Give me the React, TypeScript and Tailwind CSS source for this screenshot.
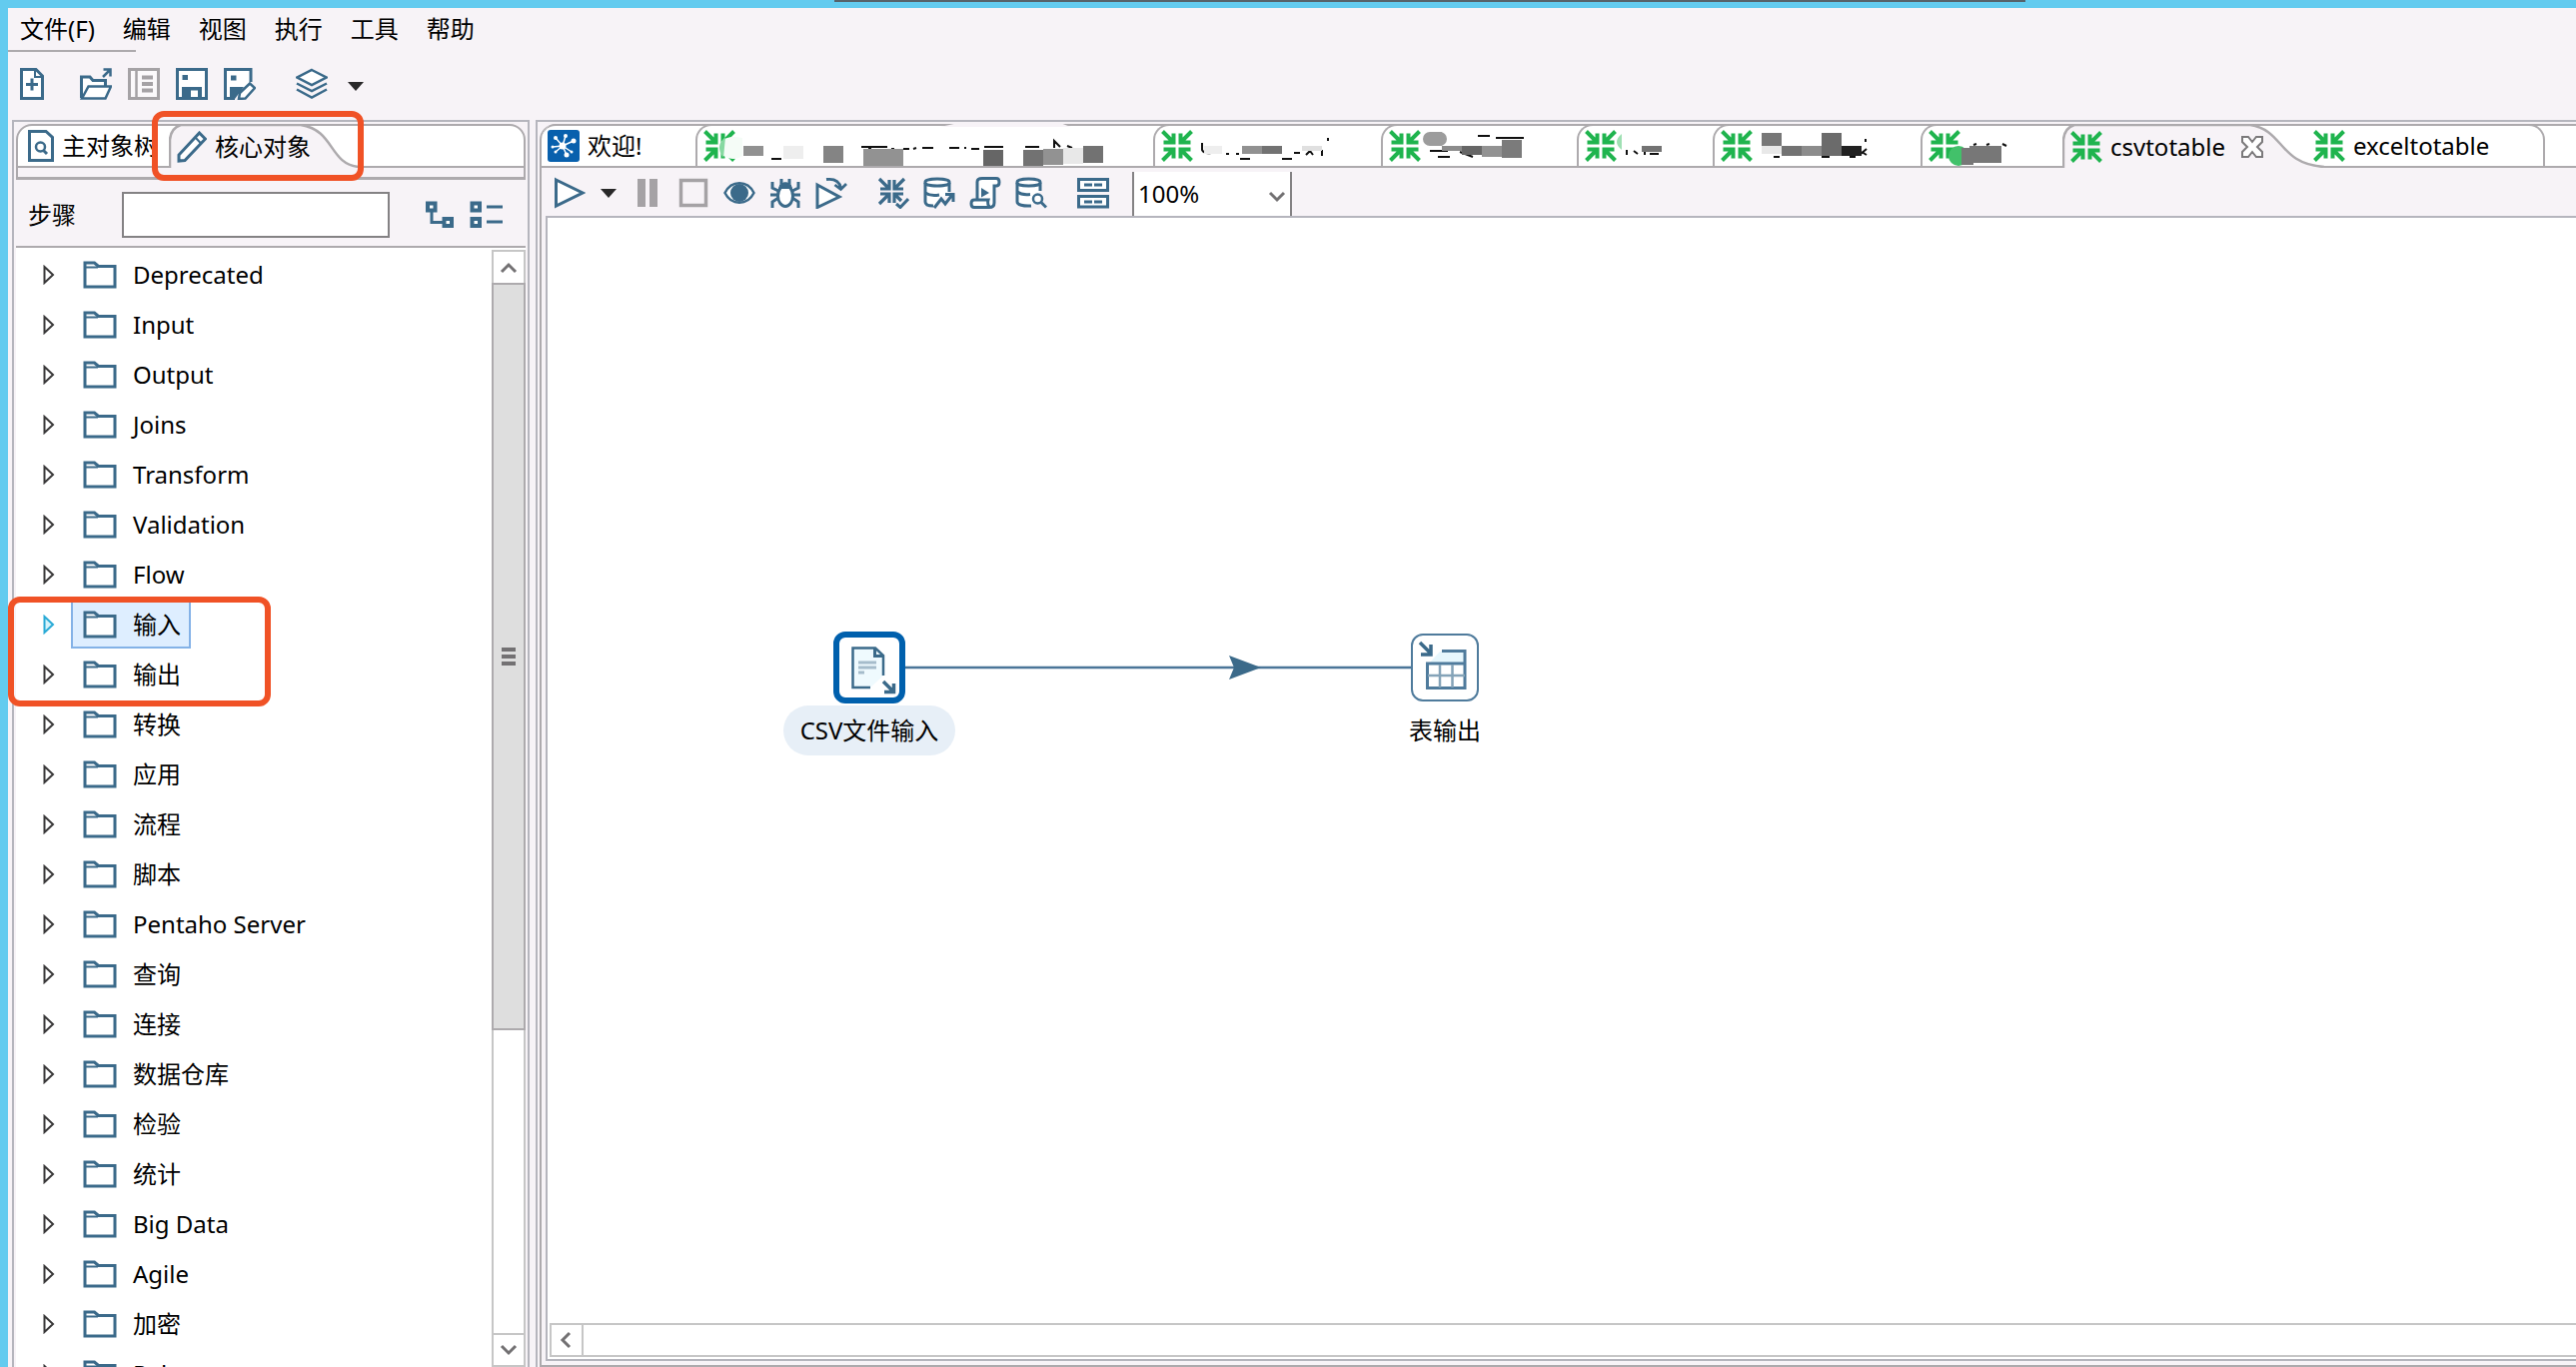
import React from "react";

const INK = "#3b6a8a";
const GRAY = "#a5a2a5";

type IconProps = { children: React.ReactNode; w?: number; h?: number; vb?: string };

function Icon({ children, w = 32, h = 32, vb = "0 0 32 32" }: IconProps) {
  return (
    <svg width={w} height={h} viewBox={vb} fill="none" stroke={INK} strokeWidth={3} className="shrink-0" aria-hidden="true">
      {children}
    </svg>
  );
}

const NewIcon = () => (
  <Icon>
    <path d="M5.500 1.500H20L26.500 8V30.500H5.500Z" fill="#fff" />
    <path d="M19 1v8h8" strokeWidth={2} />
    <path d="M16 10.500v12M10 16.500h12" />
  </Icon>
);

const OpenIcon = () => (
  <Icon>
    <path d="M1.500 30V9H10L13 12.500H25.500V19" fill="#fff" />
    <path d="M2 30.500L8.500 18.500H31L25.500 30.500Z" fill="#fff" strokeWidth={2.500} />
    <path d="M23 9L30 2M23.500 1.500H30.500V8.500" strokeWidth={2.500} />
  </Icon>
);

const ListIcon = () => (
  <Icon>
    <g stroke={GRAY}>
      <path d="M1.500 1.500H30.500V30.500H1.500Z" fill="#fbf9fb" />
      <path d="M8.500 2V30" strokeWidth={2.500} />
      <path d="M14 9.500H25M14 16H25M14 22.500H25" strokeWidth={4} />
    </g>
  </Icon>
);

const SaveIcon = () => (
  <Icon>
    <path d="M1.500 1.500H30.500V30.500H1.500Z" fill="#fff" />
    <path d="M6 19H26V31H6Z" fill={INK} stroke="none" />
    <path d="M15 22.500H22V29H15Z" fill="#fff" stroke="none" />
    <path d="M6.500 7H12V12H6.500Z" fill={INK} stroke="none" />
  </Icon>
);

const SaveEditIcon = () => (
  <Icon>
    <path d="M27 14V1.500H1.500V30.500H11" fill="#fff" />
    <path d="M7 7.500H12.500V12.500H7Z" fill={INK} stroke="none" />
    <path d="M6 19H20L11 31H6Z" fill={INK} stroke="none" />
    <path d="M16 25L26 15.500L31 20L21.500 30.500L15 31Z" fill="#fff" strokeWidth={2.500} />
  </Icon>
);

const LayersIcon = () => (
  <Icon>
    <path d="M16 2L30.500 9.500L16 17L1.500 9.500Z" fill="#fff" strokeWidth={2.500} />
    <path d="M1 15.500L16 23L31 15.500M1 21.500L16 29.500L31 21.500" strokeWidth={2.500} />
  </Icon>
);

const Caret = () => (
  <svg width="16" height="9" viewBox="0 0 16 9" aria-hidden="true">
    <path d="M0 0H16L8 9Z" fill="#292829" />
  </svg>
);

const DocSearchIcon = () => (
  <Icon w={26} h={32} vb="0 0 26 32">
    <path d="M1.500 1.500H18L24.500 7.500V30.500H1.500Z" fill="#fff" />
    <circle cx="12.500" cy="17" r="4.500" strokeWidth={2.500} />
    <path d="M15.500 20.500L19 24" />
  </Icon>
);

const PencilIcon = () => (
  <Icon w={30} h={32} vb="0 0 30 32">
    <path d="M2 30V24L22.500 2L28.500 8L8 29.500Z" fill="#fff" />
    <path d="M18.500 6.500L24.500 13" strokeWidth={2} />
  </Icon>
);

const TreeIcon = () => (
  <Icon w={28} h={28} vb="0 0 28 28">
    <path d="M2 2.500H9.500V9.500H2ZM18.500 18H26V25H18.500Z" fill="#fff" strokeWidth={4} />
    <path d="M6 11V21.500H17" strokeWidth={3} />
  </Icon>
);

const TreeListIcon = () => (
  <Icon w={34} h={28} vb="0 0 34 28">
    <path d="M2.500 2.500H10V9.500H2.500ZM2.500 18H10V25H2.500Z" fill="#fff" strokeWidth={4} />
    <path d="M17 6H33M17 21H33" strokeWidth={3} />
  </Icon>
);

const FolderIcon = () => (
  <Icon w={34} h={28} vb="0 0 34 28">
    <path d="M2 26V2H11.500L15.500 5.500H32V26Z" fill="#fff" strokeWidth={3} />
    <path d="M3 6.500H15" strokeWidth={2} />
  </Icon>
);

const TransIcon = () => (
  <svg width="32" height="32" viewBox="0 0 32 32" fill="none" stroke="#1fb44e" strokeWidth="4" className="shrink-0" aria-hidden="true">
    <path d="M1.500 1.500L12 12M2.500 12.500H12.500V3.500" />
    <path d="M30.500 1.500L20 12M29.500 12.500H19.500V3.500" />
    <path d="M1.500 30.500L12 20M2.500 19.500H12.500V28.500" />
    <path d="M30.500 30.500L20 20M29.500 19.500H19.500V28.500" />
  </svg>
);

const WelcomeIcon = () => (
  <svg width="32" height="32" viewBox="0 0 32 32" className="shrink-0" aria-hidden="true">
    <rect width="32" height="32" rx="3" fill="#0860ad" />
    <path d="M15 16L8 8M15 16L18 6M15 16L26 11M15 16L5 17M15 16L24 22M15 16L19 25M15 16L8 22" stroke="#fff" strokeWidth="1.500" />
    <g fill="#fff">
      <circle cx="15" cy="16" r="3.500" />
      <circle cx="8" cy="8" r="2" />
      <circle cx="18" cy="6" r="2" />
      <circle cx="26" cy="11" r="2.500" />
      <circle cx="5" cy="17" r="1.500" />
      <circle cx="24" cy="22" r="1.500" />
      <circle cx="19" cy="25" r="2.500" />
      <circle cx="8" cy="22" r="1.500" />
    </g>
  </svg>
);

const PlayIcon = () => (
  <Icon>
    <path d="M2.500 3L29 16L2.500 29Z" fill="#fff" />
  </Icon>
);
const PauseIcon = () => (
  <Icon>
    <path d="M6 2H14V30H6ZM18 2H26V30H18Z" fill={GRAY} stroke="none" />
  </Icon>
);
const StopIcon = () => (
  <Icon>
    <path d="M3.500 3.500H28.500V28.500H3.500Z" stroke={GRAY} strokeWidth={3.500} />
  </Icon>
);
const EyeIcon = () => (
  <Icon>
    <path d="M1.500 16C8 3 24 3 30.500 16C24 29 8 29 1.500 16Z" fill="#fff" strokeWidth={2.500} />
    <circle cx="16" cy="16" r="9" fill={INK} stroke="none" />
  </Icon>
);
const BugIcon = () => (
  <Icon>
    <path d="M12 2V7M20 2V7M3 5V11L9 14M29 5V11L23 14M1 18H8M31 18H24M3 31V25L9 21M29 31V25L23 21M10 9H22" strokeWidth={3} />
    <ellipse cx="16" cy="19" rx="7.500" ry="10.500" fill="#fff" strokeWidth={3} />
    <path d="M9 12C10 3 22 3 23 12Z" fill={INK} stroke="none" />
  </Icon>
);
const ReplayIcon = () => (
  <Icon>
    <path d="M2 8L24 20L2 30.500Z" fill="#fff" />
    <path d="M11 2.500C19 1.500 24 4 25.500 11M19.500 8L25.500 12.500L31 7" strokeWidth={2.800} />
  </Icon>
);
const VerifyIcon = () => (
  <Icon>
    <path d="M2 2L11 11M3 12H12V3M27 2L18 11M26 12H17V3M2 27L11 18M3 17H12V26M24 24L18 18M26 17H17V26" strokeWidth={3.200} />
    <path d="M19 27L23 30.500L31 22" strokeWidth={3} />
  </Icon>
);
const DbArrowIcon = () => (
  <Icon>
    <path d="M26 15V5C26 1 2 1 2 5V25C2 28 6 29 10 29" fill="#fff" strokeWidth={3} />
    <path d="M2 6C2 10 26 10 26 6M2 16C5 18 11 19 16 18" strokeWidth={3} />
    <path d="M11 31L18 22L22 27L29 18M22 17.500H30V25" strokeWidth={3} />
  </Icon>
);
const ScriptIcon = () => (
  <Icon>
    <path d="M8 22V5C8 1.500 11 1.500 13 1.500H27C31 1.500 31 9 27 9H25V26C25 30 22 30.500 20 30.500H5C1 30.500 1 23 5 23H19C18 26 19 30 21 30" fill="#fff" strokeWidth={3} />
    <path d="M12 11L20 16L12 20.500Z" fill={INK} stroke="none" />
  </Icon>
);
const DbSearchIcon = () => (
  <Icon>
    <path d="M25 14V5C25 1 2 1 2 5V25C2 28 8 29.500 16 29" fill="#fff" strokeWidth={3} />
    <path d="M2 6C2 10 25 10 25 6M2 15C6 18 11 18 15 17.500" strokeWidth={3} />
    <circle cx="22.500" cy="22" r="4.500" fill="#fff" strokeWidth={2.500} />
    <path d="M26 25.500L31 30.500" />
  </Icon>
);
const ResultsIcon = () => (
  <Icon>
    <path d="M1.500 2.500H30.500V13.500H1.500ZM1.500 19.500H30.500V30H1.500Z" fill="#fff" strokeWidth={3} />
    <path d="M7 8H15M17 8H25M7 25H15M17 25H25" />
  </Icon>
);

const Chevron = ({ d }: { d: string }) => (
  <svg width="18" height="18" viewBox="0 0 18 18" fill="none" stroke="#737173" strokeWidth="3" aria-hidden="true">
    <path d={d} />
  </svg>
);

type Block = [number, number, number, number, string];

/* Masked tab titles: grey blocks over what is left of the strokes beneath. */
function Masked({ x, w, blocks, marks, extra }: { x: number; w: number; blocks: Block[]; marks: string; extra?: React.ReactNode }) {
  return (
    <svg width={w} height={40} viewBox={`${x} 126 ${w} 40`} className="shrink-0 overflow-visible" aria-hidden="true">
      {extra}
      <path d={marks} stroke="#101010" strokeWidth="2" fill="none" />
      {blocks.map(([bx, by, bw, bh, c], i) => (
        <rect key={i} x={bx} y={by} width={bw} height={bh} fill={c} />
      ))}
    </svg>
  );
}

function ActiveShape({ w, flat }: { w: number; flat: number }) {
  return (
    <svg width={w} height={44} viewBox={`0 0 ${w} 44`} className="absolute -top-[2px] left-0" fill="none" aria-hidden="true">
      <path
        d={`M1 44V16Q2 4 12 1H${flat}C${flat + 34} 6 ${flat + 28} 40 ${w} 43V44Z`}
        fill="#f7f3f7"
      />
      <path d={`M1 44V16Q2 4 12 1H${flat}C${flat + 34} 6 ${flat + 28} 40 ${w} 43`} stroke="#adaaad" strokeWidth="2.500" />
    </svg>
  );
}

const TAB = "-mt-[2px] flex shrink-0 items-center overflow-hidden rounded-tl-2xl border-l-2 border-t-2 border-[#adaaad] pl-[6px] text-left";

const folders = [
  "Deprecated", "Input", "Output", "Joins", "Transform", "Validation", "Flow", "输入", "输出", "转换", "应用", "流程",
  "脚本", "Pentaho Server", "查询", "连接", "数据仓库", "检验", "统计", "Big Data", "Agile", "加密", "Palo",
];

const topTools: [string, () => React.ReactElement][] = [
  ["打开", OpenIcon],
  ["浏览", ListIcon],
  ["保存", SaveIcon],
  ["另存为", SaveEditIcon],
];
const runTools: [string, () => React.ReactElement][] = [
  ["暂停", PauseIcon],
  ["停止", StopIcon],
  ["预览", EyeIcon],
  ["调试", BugIcon],
  ["重放", ReplayIcon],
];
const dbTools: [string, () => React.ReactElement][] = [
  ["校验", VerifyIcon],
  ["影响分析", DbArrowIcon],
  ["SQL", ScriptIcon],
  ["浏览数据库", DbSearchIcon],
];

function LeftPanel() {
  return (
    <aside className="mr-[6px] flex w-[518px] shrink-0 flex-col border-2 border-b-0 border-[#b5b5bd] px-[2px] pt-[2px]">
      <div className="relative flex h-11 shrink-0 rounded-t-2xl border-2 border-[#adaaad] bg-white">
        <button className="flex w-[151px] shrink-0 items-center gap-2 overflow-hidden whitespace-nowrap pl-[10px]">
          <DocSearchIcon />
          主对象树
        </button>
        <button className="relative flex h-[42px] w-[190px] shrink-0 items-center pl-2">
          <ActiveShape w={190} flat={132} />
          <span className="relative flex items-center gap-2 whitespace-nowrap">
            <PencilIcon />
            核心对象
          </span>
        </button>
      </div>
      <div className="h-3 shrink-0 border-x-2 border-b-[3px] border-[#adaaad]" />
      <div className="flex h-[68px] shrink-0 items-center border-b-2 border-[#adaaad] pl-3 pt-1">
        <label htmlFor="steps" className="w-[94px]">步骤</label>
        <input id="steps" className="h-[46px] w-[268px] border-2 border-[#848284] bg-white px-2 outline-none" />
        <button aria-label="展开" className="ml-9"><TreeIcon /></button>
        <button aria-label="折叠" className="ml-4"><TreeListIcon /></button>
      </div>
      <div className="flex min-h-0 flex-1 bg-white pt-[2px]">
        <ul className="min-w-0 flex-1 overflow-hidden">
          {folders.map((name, i) => (
            <li key={name} className="flex h-[50px] items-center pl-[27px]">
              <svg width="12" height="20" viewBox="0 0 12 20" className="shrink-0" aria-hidden="true">
                <path d="M1.500 2L10 10L1.500 18Z" fill={i === 7 ? "#d6f3fb" : "#fff"} stroke={i === 7 ? "#29aad6" : "#393839"} strokeWidth="2" />
              </svg>
              <button
                className={
                  i === 7
                    ? "ml-4 flex h-12 items-center gap-4 border-2 border-[#84b2e7] bg-[#deeeff] pl-[10px] pr-2"
                    : "ml-4 flex h-12 items-center gap-4 border-2 border-transparent pl-[10px] pr-2"
                }
              >
                <FolderIcon />
                {name}
              </button>
            </li>
          ))}
        </ul>
        <div className="flex w-[34px] shrink-0 flex-col border-x-2 border-t-2 border-[#c6c6c6]">
          <button aria-label="向上" className="flex h-[31px] shrink-0 items-center justify-center"><Chevron d="M2 13L9 6L16 13" /></button>
          <div className="-mx-[2px] flex h-[748px] shrink-0 flex-col items-center justify-center gap-[3px] border-2 border-[#adaaad] bg-[#dedede]">
            <span className="h-1 w-[14px] bg-[#737173]" />
            <span className="h-1 w-[14px] bg-[#737173]" />
            <span className="h-1 w-[14px] bg-[#737173]" />
          </div>
          <div className="flex-1" />
          <button aria-label="向下" className="flex h-[34px] shrink-0 items-center justify-center border-y-2 border-[#c6c6c6]"><Chevron d="M2 5L9 12L16 5" /></button>
        </div>
      </div>
    </aside>
  );
}

function EditorTabs() {
  return (
    <div className="relative flex h-11 shrink-0 border-y-2 border-[#adaaad] bg-white">
      <button className={`${TAB} -ml-[2px] w-[156px] gap-2`}><WelcomeIcon />欢迎!</button>
      <button className="-mt-[2px] flex w-[458px] shrink-0 items-center rounded-tl-2xl border-l-2 border-t-2 border-[#adaaad] pl-[6px]" aria-label="转换 1">
        <TransIcon />
        <Masked
          x={736}
          w={400}
          extra={
            <g stroke="none">
              <path d="M743 138C724 134 718 144 720 150C722 158 735 162 743 156Z" fill="#f5fcf7" />
              <path d="M726 137Q715 146 724 158Z" fill="#86d9a1" />
              <path d="M940 127C970 121 975 119 1000 118H1040C1055 120 1060 123 1072 127Z" fill="#f7f3f7" />
            </g>
          }
          marks="M772 159H782M862 147H888M869 149H872M892 149H895M904 149H910M914 149L917 148M924 149V148H934M950 148H960M966 149V147M972 149H980M985 147H1004M1026 147H1040M1055 148V141L1061 147M1068 146L1073 148"
          blocks={[
            [744, 146, 20, 10, "#919191"], [784, 146, 20, 13, "#eeeeee"], [824, 146, 20, 17, "#848484"], [864, 149, 40, 17, "#929292"],
            [984, 150, 20, 16, "#666666"], [1024, 150, 20, 16, "#727272"], [1044, 149, 20, 16, "#929292"], [1064, 148, 20, 16, "#e8e8e8"],
            [1084, 146, 20, 17, "#727272"],
          ]}
        />
      </button>
      <button className={`${TAB} w-[228px]`} aria-label="转换 2">
        <TransIcon />
        <Masked x={1195} w={150} marks="M1204 143V150Q1206 154 1213 153M1228 154H1231M1238 154H1241M1242 159H1252M1284 159H1294M1296 153H1302M1308 155L1312 151L1315 155M1324 150V156M1330 138V141"
          blocks={[[1206, 146, 18, 8, "#eeeeee"], [1244, 146, 20, 8, "#919191"], [1264, 146, 20, 8, "#727272"], [1304, 146, 20, 5, "#e0e0e0"]]} />
      </button>
      <button className={`${TAB} w-[196px]`} aria-label="转换 3">
        <TransIcon />
        <Masked x={1423} w={130} marks="M1432 151H1450M1440 157H1452M1480 136H1492M1498 138H1526M1462 152L1475 157"
          extra={<rect x={1425} y={132} width="24" height="14" rx="7" fill="#9c9c9c" />}
          blocks={[[1436, 132, 8, 14, "#9c9c9c"], [1444, 146, 20, 5, "#8c8c8c"], [1464, 146, 20, 9, "#666666"], [1484, 146, 20, 11, "#929292"], [1504, 140, 20, 18, "#7b7b7b"]]} />
      </button>
      <button className={`${TAB} w-[136px]`} aria-label="转换 4">
        <TransIcon />
        <Masked x={1619} w={80} marks="M1629 150V155M1636 151L1640 154M1647 155V150M1652 154H1661"
          extra={<path d="M1624 134Q1614 142 1624 150Z" fill="#9fe0b3" />}
          blocks={[[1644, 146, 20, 6, "#737373"]]} />
      </button>
      <button className={`${TAB} w-[208px]`} aria-label="转换 5">
        <TransIcon />
        <Masked x={1755} w={130} marks="M1776 157H1782M1824 157H1832M1852 157H1858M1862 155L1869 149M1868 139V142M1864 152L1869 155"
          blocks={[[1764, 133, 20, 13, "#777777"], [1764, 146, 20, 8, "#e8e8e8"], [1784, 146, 20, 10, "#727272"], [1804, 146, 20, 10, "#8c8c8c"], [1824, 133, 20, 23, "#6b6b6b"], [1844, 146, 20, 10, "#212121"]]} />
      </button>
      <button className={`${TAB} w-[142px]`} aria-label="转换 6">
        <TransIcon />
        <Masked x={1963} w={60} marks="M1976 145L1979 144M1989 145L1992 144M2005 144L2009 146"
          extra={<circle cx="1961" cy="156" r="10" fill="#42c16a" />}
          blocks={[[1964, 148, 12, 17, "#777777"], [1972, 146, 32, 17, "#777777"]]} />
      </button>
      <button className="relative flex h-[42px] w-[243px] shrink-0 items-center pl-2">
        <ActiveShape w={262} flat={188} />
        <span className="relative flex items-center gap-2">
          <TransIcon />
          csvtotable
          <svg width="22" height="22" viewBox="0 0 22 22" className="ml-2" fill="#fff" stroke="#7b797b" strokeWidth="2" aria-hidden="true">
            <path d="M1 1H7L11 6L15 1H21V6L16 11L21 16V21H15L11 16L7 21H1V16L6 11L1 6V1Z" />
          </svg>
        </span>
      </button>
      <button className="relative -mt-[2px] flex w-[240px] shrink-0 items-center gap-2 rounded-tr-2xl border-r-2 border-t-2 border-[#adaaad] pl-2">
        <TransIcon />
        exceltotable
      </button>
    </div>
  );
}

function ToolButton({ label, Glyph }: { label: string; Glyph: () => React.ReactElement }) {
  return (
    <button aria-label={label} className="flex w-[46px] shrink-0 justify-center"><Glyph /></button>
  );
}

function Canvas() {
  return (
    <div className="relative min-h-0 flex-1 overflow-hidden">
      <svg className="absolute left-[358px] top-[435px]" width="508" height="30" viewBox="0 0 508 30" aria-hidden="true">
        <path d="M0 15H508" stroke="#4a7598" strokeWidth="2.500" />
        <path d="M324 3L356 15L324 27L329 15Z" fill={INK} />
      </svg>
      <div className="absolute left-[286px] top-[414px] flex size-[72px] items-center justify-center rounded-xl border-[6px] border-[#0060ad] bg-white">
        <svg width="60" height="60" viewBox="0 0 60 60" fill="none" stroke={INK} strokeWidth="2.500" aria-hidden="true">
          <path d="M31 50H13.500V10.500H36L44 18V38" fill="#effafe" />
          <path d="M35.500 10V18.500H44" strokeWidth="3" />
          <path d="M19 25H37M19 30H37M19 35H25" stroke="#a5bccb" strokeWidth="3" />
          <path d="M44 44L54 54M45 54.500H54.500V46" strokeWidth="3.500" />
        </svg>
      </div>
      <div className="absolute left-[236px] top-[488px] flex h-[50px] w-[172px] items-center justify-center whitespace-nowrap rounded-full bg-[#e7eff7]">CSV文件输入</div>
      <div className="absolute left-[864px] top-[416px] flex size-[68px] items-center justify-center rounded-xl border-2 border-[#4f7b9c] bg-white">
        <svg width="62" height="62" viewBox="0 0 62 62" fill="none" stroke={INK} strokeWidth="3" aria-hidden="true">
          <path d="M26 15H51V27H15Z" fill="#e7f7fd" stroke="none" />
          <path d="M28 14.500H51V51.500H13.500V27H51" stroke="#4f7b9c" />
          <path d="M14 39H51M26 28V51M38.500 28V51" stroke="#84a3b8" strokeWidth="2.500" />
          <path d="M6 6L16 16M7 18H17V8" strokeWidth="3.500" />
        </svg>
      </div>
      <div className="absolute left-[854px] top-[488px] flex h-[50px] w-[88px] items-center justify-center whitespace-nowrap">表输出</div>
    </div>
  );
}

export default function App() {
  return (
    <div className="relative h-screen overflow-hidden bg-[#63cbef] pl-2 pt-2 text-2xl leading-8 text-black [font-family:'Noto_Sans','Noto_Sans_CJK_SC',sans-serif]">
      <div className="absolute left-[835px] top-0 h-[2px] w-[1192px] bg-[#56636b]" />
      <div className="flex h-full flex-col bg-[#f7f3f7]">
        <nav className="flex h-[42px] shrink-0 items-center gap-7 pl-3">
          {["文件(F)", "编辑", "视图", "执行", "工具", "帮助"].map((m) => (
            <button key={m}>{m}</button>
          ))}
        </nav>
        <div className="h-[2px] w-32 shrink-0 bg-[#adaaad]" />
        <div className="mb-1 flex h-16 shrink-0 items-center">
          <button aria-label="新建" className="mr-4 flex w-12 justify-center"><NewIcon /></button>
          {topTools.map(([label, Glyph]) => (
            <button key={label} aria-label={label} className="flex w-12 justify-center"><Glyph /></button>
          ))}
          <button aria-label="透视图" className="ml-6 flex w-12 justify-center"><LayersIcon /></button>
          <button aria-label="更多透视图" className="flex w-10 justify-center pt-1"><Caret /></button>
        </div>
        <div className="flex min-h-0 flex-1 pl-1">
          <LeftPanel />
          <main className="flex min-w-0 flex-1 border-l-2 border-t-2 border-[#b5b5bd] pl-[2px] pt-[2px]">
            <div className="flex min-w-0 flex-1 flex-col overflow-hidden rounded-tl-2xl border-b-2 border-l-2 border-[#adaaad]">
              <EditorTabs />
              <div className="flex h-12 shrink-0 items-center pl-[5px] pt-[2px]">
                <button aria-label="运行" className="flex w-[46px] justify-center"><PlayIcon /></button>
                <button aria-label="运行选项" className="flex w-8 justify-center"><Caret /></button>
                {runTools.map(([l, g]) => <ToolButton key={l} label={l} Glyph={g} />)}
                <div className="w-4" />
                {dbTools.map(([l, g]) => <ToolButton key={l} label={l} Glyph={g} />)}
                <div className="w-4" />
                <ToolButton label="执行结果" Glyph={ResultsIcon} />
                <div className="relative ml-4 h-11 w-40 self-end">
                  <select aria-label="缩放" defaultValue="100%" className="h-full w-full appearance-none border-x-2 border-[#848284] bg-white pl-1 outline-none">
                    <option>100%</option>
                    <option>200%</option>
                  </select>
                  <span className="pointer-events-none absolute right-[6px] top-4"><Chevron d="M2 5L9 12L16 5" /></span>
                </div>
              </div>
              <div className="mb-1 ml-1 flex min-h-0 flex-1 flex-col border-b-2 border-l-2 border-t-2 border-[#b5b5bd] bg-white">
                <Canvas />
                <div className="mb-[2px] ml-[2px] flex h-[34px] shrink-0 border-y-2 border-l-2 border-[#c6c6c6]">
                  <button aria-label="向左" className="flex w-8 items-center justify-center border-r-2 border-[#c6c6c6]"><Chevron d="M12 2L5 9L12 16" /></button>
                </div>
              </div>
            </div>
          </main>
        </div>
      </div>
      <div className="pointer-events-none absolute left-[152px] top-[111px] h-[70px] w-[212px] rounded-xl border-[6px] border-[#f05226]" />
      <div className="pointer-events-none absolute left-2 top-[597px] h-[110px] w-[263px] rounded-xl border-[6px] border-[#f05226]" />
    </div>
  );
}
